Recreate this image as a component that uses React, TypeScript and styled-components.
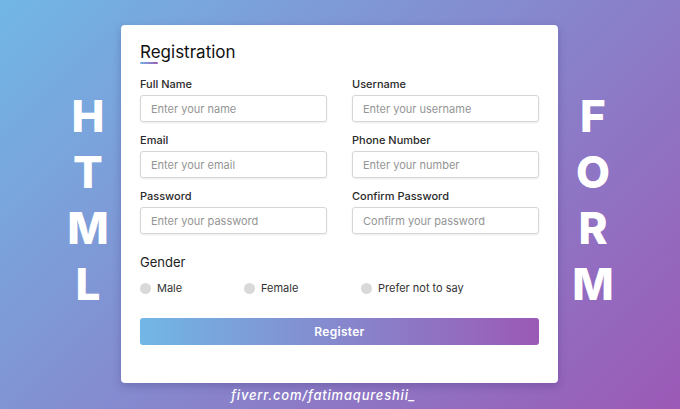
import styled, { createGlobalStyle } from 'styled-components';

const GlobalStyle = createGlobalStyle`
  html, body {
    margin: 0;
    padding: 0;
  }
  body {
    width: 680px;
    height: 409px;
    overflow: hidden;
    font-family: Inter, 'Noto Sans', sans-serif;
    background: linear-gradient(135deg, #71b7e6, #9b59b6);
  }
`;

const Page = styled.div`
  width: 680px;
  height: 409px;
  box-sizing: border-box;
  padding: 25px 0 0 68px;
  display: flex;
  flex-direction: column;
`;

const Stage = styled.div`
  display: flex;
  align-items: flex-start;
`;

const SideWord = styled.div<{ $side: 'left' | 'right' }>`
  width: 40px;
  display: flex;
  flex-direction: column;
  align-items: center;
  padding-top: 63px;
  margin: ${p => (p.$side === 'left' ? '0 13px 0 0' : '0 0 0 15px')};
  color: #fff;
  font-size: 44px;
  font-weight: 800;
  line-height: 56px;
`;

const Card = styled.div`
  width: 437px;
  height: 358px;
  background: #fff;
  border-radius: 4px;
  box-shadow: 0 3px 8px rgba(40, 30, 90, 0.25);
  box-sizing: border-box;
  padding: 16px 19px 0;
`;

const Title = styled.div`
  font-size: 17px;
  font-weight: 400;
  line-height: 22px;
  color: #111;
  &::after {
    content: '';
    display: block;
    width: 18px;
    height: 2px;
    margin-top: -1px;
    border-radius: 1px;
    background: linear-gradient(135deg, #71b7e6, #9b59b6);
  }
`;

const Fields = styled.div`
  display: grid;
  grid-template-columns: 187px 187px;
  column-gap: 25px;
  row-gap: 11px;
  margin-top: 13px;
`;

const Field = styled.label`
  display: flex;
  flex-direction: column;
  gap: 4px;
`;

const Label = styled.span`
  font-size: 11px;
  font-weight: 500;
  line-height: 14px;
  color: #2a2a2a;
`;

const Input = styled.input`
  box-sizing: border-box;
  width: 187px;
  height: 27px;
  padding: 0 10px;
  border: 1px solid #d6d6d6;
  border-radius: 3px;
  box-shadow: 0 1px 2px rgba(0, 0, 0, 0.08);
  font-family: inherit;
  font-size: 11px;
  outline: none;
  &::placeholder {
    color: #959595;
  }
`;

const GenderTitle = styled.div`
  margin-top: 20px;
  font-size: 13px;
  font-weight: 400;
  line-height: 16px;
  color: #1e1e1e;
`;

const Options = styled.div`
  display: grid;
  grid-template-columns: 104px 117px auto;
  margin-top: 11px;
`;

const Option = styled.label`
  display: flex;
  align-items: center;
  gap: 6px;
  font-size: 11px;
  line-height: 14px;
  color: #333;
`;

const Dot = styled.span`
  width: 11px;
  height: 11px;
  border-radius: 50%;
  background: #d9d9d9;
`;

const Button = styled.button`
  display: block;
  width: 100%;
  height: 27px;
  margin-top: 23px;
  border: none;
  border-radius: 3px;
  background: linear-gradient(90deg, #71b7e6, #9b59b6);
  color: #fff;
  font-family: inherit;
  font-size: 12px;
  font-weight: 600;
  letter-spacing: 0.3px;
`;

const Footer = styled.div`
  margin: 4px 0 0 163px;
  color: #fff;
  font-size: 13px;
  font-style: italic;
  font-weight: 500;
  letter-spacing: 0.8px;
  line-height: 16px;
`;

const fields = [
  ['Full Name', 'Enter your name'],
  ['Username', 'Enter your username'],
  ['Email', 'Enter your email'],
  ['Phone Number', 'Enter your number'],
  ['Password', 'Enter your password'],
  ['Confirm Password', 'Confirm your password'],
];

export default function App() {
  return (
    <>
      <GlobalStyle />
      <Page>
        <Stage>
          <SideWord $side="left">
            {'HTML'.split('').map(c => (
              <span key={c}>{c}</span>
            ))}
          </SideWord>
          <Card>
            <Title>Registration</Title>
            <Fields>
              {fields.map(([label, ph]) => (
                <Field key={label}>
                  <Label>{label}</Label>
                  <Input placeholder={ph} />
                </Field>
              ))}
            </Fields>
            <GenderTitle>Gender</GenderTitle>
            <Options>
              {['Male', 'Female', 'Prefer not to say'].map(g => (
                <Option key={g}>
                  <Dot />
                  {g}
                </Option>
              ))}
            </Options>
            <Button>Register</Button>
          </Card>
          <SideWord $side="right">
            {'FORM'.split('').map(c => (
              <span key={c}>{c}</span>
            ))}
          </SideWord>
        </Stage>
        <Footer>fiverr.com/fatimaqureshii_</Footer>
      </Page>
    </>
  );
}
